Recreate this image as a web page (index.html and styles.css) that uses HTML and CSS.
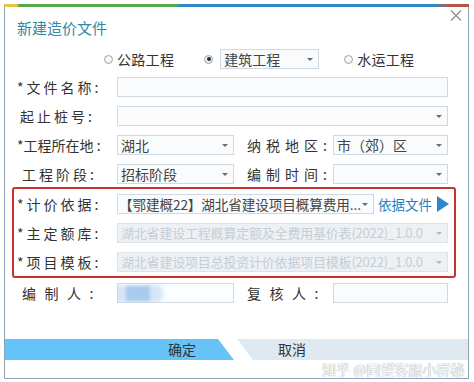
FILE: index.html
```
<!DOCTYPE html>
<html lang="zh">
<head>
<meta charset="utf-8">
<title>新建造价文件</title>
<link rel="stylesheet" href="styles.css">
</head>
<body>
<div class="dialog">
  <div class="stripe"></div>
  <div class="header">
    <span class="title">新建造价文件</span>
    <svg class="close" width="12" height="11" viewBox="0 0 12 11"><path d="M1 0.5 L11 10.5 M11 0.5 L1 10.5" stroke="#8a8f94" stroke-width="1.3" fill="none"/></svg>
  </div>
  <div class="types">
    <span class="radio"></span><span class="rtext">公路工程</span>
    <span class="radio checked gap1"></span>
    <div class="field select typesel"><span class="val">建筑工程</span><span class="arrow"></span></div>
    <span class="radio gap2"></span><span class="rtext">水运工程</span>
  </div>
  <div class="form">
    <div class="row">
      <span class="lbl sp3">*文件名称:</span>
      <div class="field grow"></div>
    </div>
    <div class="row">
      <span class="lbl sp3 ind">起止桩号:</span>
      <div class="field grow select"><span class="arrow"></span></div>
    </div>
    <div class="row">
      <span class="lbl">*工程所在地 :</span>
      <div class="field half select"><span class="val">湖北</span><span class="arrow"></span></div>
      <span class="lbl2 sp5">纳税地区:</span>
      <div class="field grow select"><span class="val">市（郊）区</span><span class="arrow"></span></div>
    </div>
    <div class="row">
      <span class="lbl sp3 ind2">工程阶段:</span>
      <div class="field half select"><span class="val">招标阶段</span><span class="arrow"></span></div>
      <span class="lbl2 sp5">编制时间:</span>
      <div class="field grow select"><span class="arrow"></span></div>
    </div>
    <div class="redbox">
      <div class="row">
        <span class="lbl sp3">*计价依据:</span>
        <div class="field grow select"><span class="val tight">【鄂建概22】湖北省建设项目概算费用...</span><span class="arrow"></span></div>
        <a class="link">依据文件</a>
        <span class="play"></span>
      </div>
      <div class="row">
        <span class="lbl sp3">*主定额库:</span>
        <div class="field grow select disabled"><span class="val">湖北省建设工程概算定额及全费用基价表(2022)_1.0.0</span><span class="arrow"></span></div>
      </div>
      <div class="row">
        <span class="lbl sp3">*项目模板:</span>
        <div class="field grow select disabled"><span class="val">湖北省建设项目总投资计价依据项目模板(2022)_1.0.0</span><span class="arrow"></span></div>
      </div>
    </div>
    <div class="row">
      <span class="lbl sp8 ind2">编制人:</span>
      <div class="field half blurfield"><span class="blur1"></span><span class="blur2"></span></div>
      <span class="lbl2 sp8">复核人:</span>
      <div class="field grow"></div>
    </div>
  </div>
  <div class="buttons">
    <div class="btn ok">确定</div>
    <div class="btn cancel">取消</div>
  </div>
  <div class="watermark">知乎 @同望客服小群秘</div>
</div>
</body>
</html>
```
FILE: styles.css
```
* { box-sizing: border-box; }
html, body { margin: 0; padding: 0; background: #ffffff; }
body {
  width: 474px; height: 382px; overflow: hidden;
  padding: 4px 0 0 4px;
  font-family: "Noto Sans CJK SC", "Noto Sans", sans-serif;
  color: #333;
}
.dialog {
  position: relative;
  width: 465px; height: 375px;
  border: 1px solid #8fa3b2;
  border-top: none;
  background: #fff;
  display: flex; flex-direction: column;
}
.stripe {
  height: 3px; margin: 0 -1px;
  background: linear-gradient(to right, #e6c24a 0, #e6c24a 13px, #55aa50 15px, #55aa50 172px, #2f8bc6 176px, #2f8bc6 430px, #b9544b 445px, #b9544b 100%);
}
.header {
  height: 39px; position: relative;
  padding: 8px 0 0 12px;
}
.title { font-size: 15px; line-height: 20px; color: #2f8aa8; }
.close { position: absolute; right: 6px; top: 3px; }

.types {
  height: 26px; display: flex; align-items: center;
  padding-left: 99px; font-size: 14px;
}
.radio {
  width: 9px; height: 9px; border-radius: 50%;
  border: 1px solid #9aa7b2;
  background: radial-gradient(circle at 50% 40%, #ffffff, #dfe6ec);
  position: relative; flex: none;
}
.radio.checked::after {
  content: ""; position: absolute; left: 1.5px; top: 1.5px;
  width: 4px; height: 4px; border-radius: 50%; background: #2b2b2b;
}
.rtext { margin-left: 4px; letter-spacing: 0.3px; }
.gap1 { margin-left: 30px; }
.gap2 { margin-left: 25px; }
.typesel { width: 99px; margin-left: 7px; }

.form { padding: 0 20px 0 12px; }
.row { height: 29px; display: flex; align-items: center; }
.lbl { width: 100px; flex: none; font-size: 14px; white-space: nowrap; }
.lbl2 { width: 86px; margin-left: 13px; flex: none; font-size: 14px; white-space: nowrap; }
.sp3 { letter-spacing: 3px; }
.sp5 { letter-spacing: 5px; }
.sp8 { letter-spacing: 8.5px; }
.ind { padding-left: 3px; }
.ind2 { padding-left: 5px; }

.field {
  height: 20px; border: 1px solid #cdd9e3; background: #f9fbfd;
  position: relative; display: flex; align-items: center;
  font-size: 14px; overflow: hidden; white-space: nowrap;
}
.grow { flex: 1; min-width: 0; }
.half { width: 117px; flex: none; }
.val { padding-left: 3px; line-height: 18px; color: #444; }
.val.tight { padding-left: 1px; font-size: 13.6px; letter-spacing: -0.1px; }
.select .val { padding-right: 14px; }
.arrow {
  position: absolute; right: 5px; top: 8px;
  width: 0; height: 0;
  border-left: 3px solid transparent; border-right: 3px solid transparent;
  border-top: 3px solid #6d6d6d;
}
.disabled { background: #eef1f4; border-color: #dde3e8; }
.disabled .val { color: #c4ced8; font-size: 13px; letter-spacing: -0.2px; }
.disabled .arrow { border-top-color: #b8b8b8; }

.redbox {
  margin: -1px -8px 0 -5px;
  padding: 0 6px 0 3px;
  border: 2px solid #c8332f; border-radius: 3px;
}
.link { margin-left: 4px; font-size: 13.5px; color: #1e7fc3; flex: none; }
.play {
  margin-left: 5px; flex: none; width: 0; height: 0;
  border-top: 8px solid transparent; border-bottom: 8px solid transparent;
  border-left: 12px solid #2b86cf;
  margin-right: -1px;
}

.blurfield { background: #fbfdff; }
.blur1 {
  position: absolute; left: -5px; top: 1px; width: 50px; height: 17px;
  background: #d4e6f5; filter: blur(2px); border-radius: 6px;
}
.blur2 {
  position: absolute; left: 8px; top: 2px; width: 24px; height: 15px;
  background: #a9cbeb; filter: blur(1.5px);
}

.buttons {
  margin-top: 32px; height: 21px; display: flex;
  font-size: 14px; line-height: 21px;
}
.btn { height: 21px; color: #333; }
.ok {
  width: 229px; flex: none; background: #66c3f8;
  clip-path: polygon(0 0, 213px 0, 100% 100%, 0 100%);
  padding-left: 163px;
}
.cancel {
  flex: 1; margin-left: 3px; background: #dfe9f1;
  clip-path: polygon(0 0, 100% 0, 100% 100%, 16px 100%);
  padding-left: 41px;
}
.watermark {
  position: absolute; left: 317px; top: 355px;
  font-size: 14px; color: rgba(255,255,255,0.95);
  text-shadow: 0 0 1px #a3adb5, 0 0 1px #a3adb5;
  white-space: nowrap;
}
```
